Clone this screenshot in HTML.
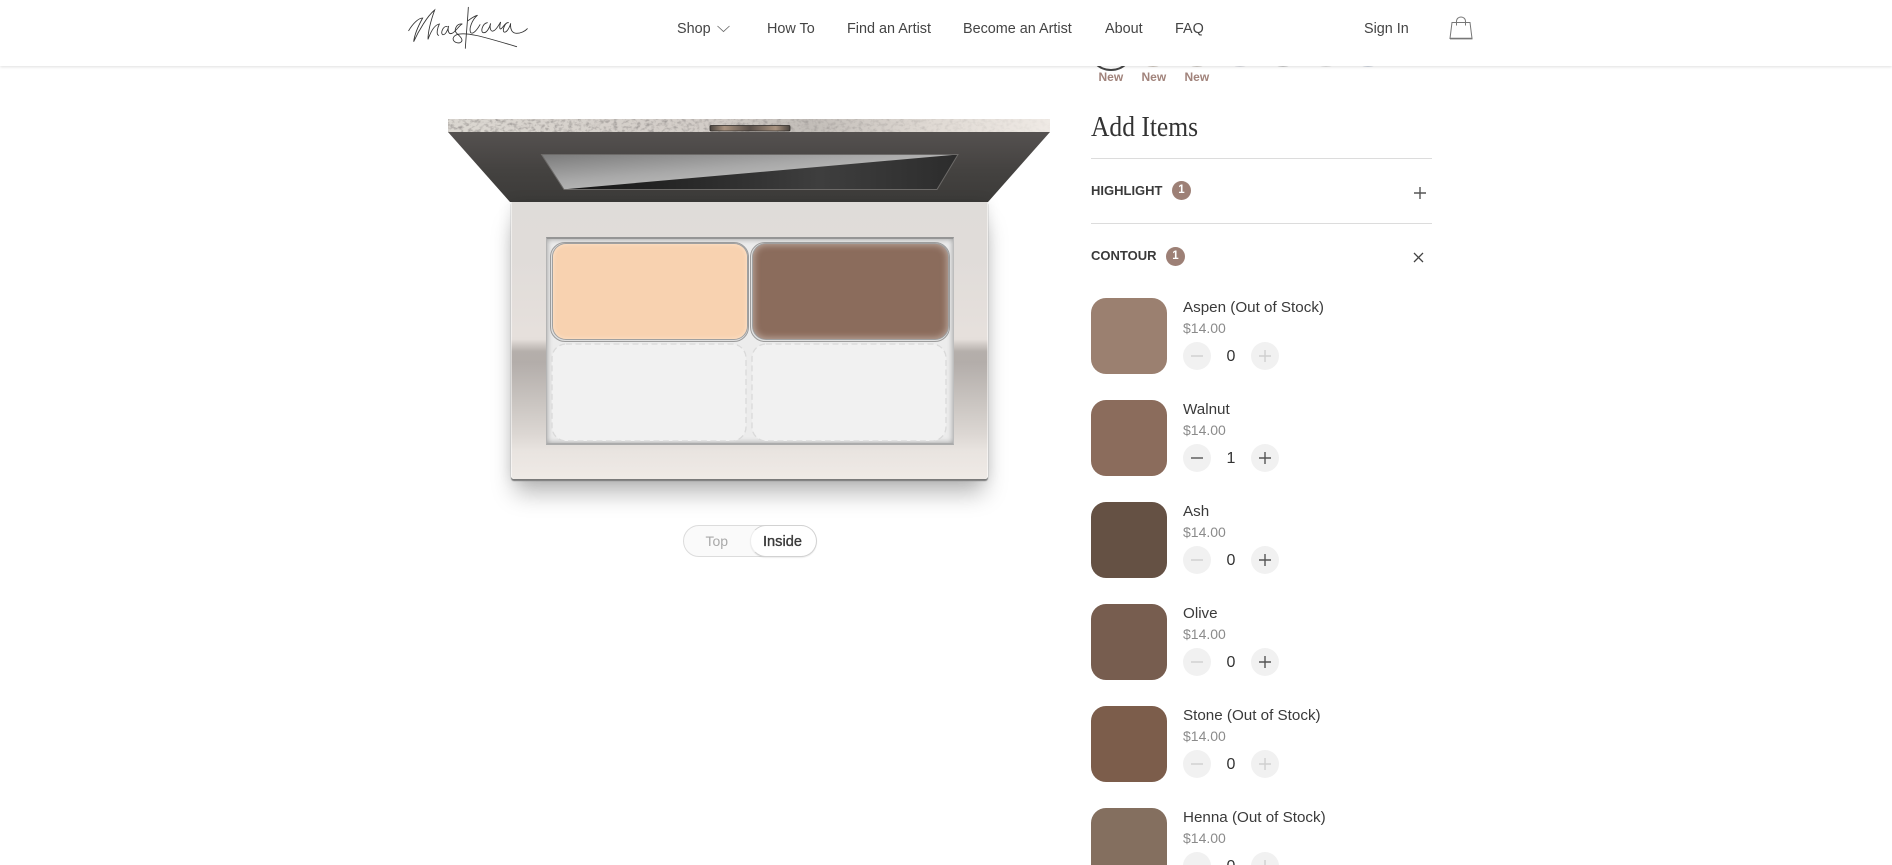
<!DOCTYPE html>
<html lang="en"><head><meta charset="utf-8"><title>Maskcara</title>
<style>
html,body{margin:0;padding:0;background:#fff;width:1892px;height:865px;overflow:hidden}
#w{position:relative;width:1892px;height:865px;overflow:hidden;font-family:"Liberation Sans",Arial,sans-serif;color:#3a3a3a}
.a{position:absolute;white-space:nowrap}
header{position:absolute;left:0;top:0;width:1892px;height:66px;background:#fff;box-shadow:0 1px 3px rgba(0,0,0,.13);z-index:5}
.nav{font-size:14.4px;line-height:20px;color:#444;top:19px}
.new{font-size:12px;font-weight:bold;color:#a1837b;top:70px;line-height:15px}
.arc{position:absolute;border-radius:50%;width:36px;height:36px;top:31px}
.rule{position:absolute;left:1091px;width:341px;height:1px;background:#dcdcdc}
.sec{font-size:13px;font-weight:bold;color:#3a3a3a;left:1091px;line-height:20px}
.bdg{position:absolute;width:19px;height:19px;border-radius:50%;background:#9d8076;color:#fff;font-size:11.5px;font-weight:bold;line-height:19px;text-align:center}
.sw{position:absolute;left:1091px;width:76px;height:76px;border-radius:15px}
.nm{left:1183px;font-size:15.2px;line-height:20px;color:#3a3a3a}
.pr{left:1183px;font-size:14px;line-height:20px;color:#8b8b8b}
.qt{left:1216px;width:30px;text-align:center;font-size:16px;line-height:20px;color:#333}
.b{position:absolute;width:28px;height:28px;border-radius:50%;background:#f1f1f1}
.b svg{display:block}
.b path{fill:none;stroke-width:1.4;stroke:#555}
.b.d path{stroke:#cfcfcf}
.body{position:absolute;left:511px;top:202px;width:477px;height:277px;border-radius:0 0 3px 3px;
background:linear-gradient(180deg,#dfdcd9 0,#e0dcd9 20%,#e6e0dc 48%,#e5dfdb 49.5%,#b5afab 54%,#b3adaa 58%,#c9c4c0 72%,#dcd7d3 84%,#e9e4e0 90%,#efeae6 100%);
box-shadow:inset 1px 0 0 rgba(255,255,255,.5),inset -1px 0 0 rgba(255,255,255,.5),0 2px 1px #7a7a7a,0 18px 22px -4px rgba(0,0,0,.28),0 0 14px rgba(0,0,0,.1)}
.well{position:absolute;left:546px;top:237px;width:408px;height:208px;background:#ececec;box-sizing:border-box;border-top:2px solid #959595;border-bottom:2px solid #ababab;border-left:1px solid #b5b5b5;border-right:1px solid #bdbdbd;box-shadow:inset 0 0 6px rgba(0,0,0,.35)}
.pan{position:absolute;box-sizing:border-box;border-radius:15px;border:1.5px solid #9c9c9c;padding:1.5px;background:#e0e0e0}
.pan i{display:block;width:100%;height:100%;border-radius:13px}
.tg{position:absolute;left:683px;top:525px;width:133px;height:32px;box-sizing:border-box;border:1px solid #dcdcdc;border-radius:16px;background:#fafafa}
.tg b{position:absolute;left:66px;top:-1px;width:67px;height:32px;box-sizing:border-box;border-radius:16px;background:#fff;border:1px solid #d2d2d2;border-left-color:#eee;box-shadow:0 1px 1px rgba(0,0,0,.08)}
</style></head><body><div id="w">

<!-- swatch row, mostly hidden beneath header -->
<div class="a" style="left:1088px;top:25px;width:42px;height:42px;border:2px solid #444;border-radius:50%"></div>
<div class="arc" style="left:1135px;background:#cfc8bf"></div>
<div class="arc" style="left:1179px;background:#d2cdc8"></div>
<div class="arc" style="left:1222px;background:#dcdde3"></div>
<div class="arc" style="left:1265px;background:#c9c9c9"></div>
<div class="arc" style="left:1308px;background:#e2e2e2"></div>
<div class="arc" style="left:1350px;background:#d0d6e0"></div>
<div class="a new" style="left:1098.5px">New</div>
<div class="a new" style="left:1141.5px">New</div>
<div class="a new" style="left:1184.5px">New</div>

<header>
<svg class="a" style="left:400px;top:0" width="140" height="60" viewBox="0 0 420 180" fill="none" stroke="#333" stroke-width="2.6" stroke-linecap="round" role="img" aria-label="Maskcara">
<path d="M26 92C38 72 55 54 68 54C58 72 44 100 41 125C56 92 82 48 104 30C94 58 84 92 84 118C92 96 104 74 118 72C112 84 108 104 116 106"/>
<path d="M142 80C130 76 120 100 128 104C136 106 144 90 146 78C142 92 146 104 156 100C166 96 176 78 186 72"/>
<path d="M186 72C170 70 160 90 170 100C184 112 192 122 180 128C166 132 150 118 166 106C190 92 250 110 350 140"/>
<path d="M205 22C203 60 198 110 196 145"/>
<path d="M204 62C215 54 224 48 232 46M232 46C216 60 206 86 212 98C220 104 232 88 240 74"/>
<path d="M262 68C248 70 240 96 250 98C262 100 270 78 272 70C268 84 272 98 282 92C290 88 298 72 302 66C298 80 298 90 304 86C310 80 318 66 326 68C316 66 306 90 312 96C320 100 330 80 332 70C330 88 336 100 350 100C362 100 375 94 382 86"/>
</svg>
<div class="a nav" style="left:677px">Shop</div>
<svg class="a" style="left:717px;top:25px" width="13" height="8" fill="none" stroke="#666" stroke-width=".8"><path d="M.5 1l6 5.6 6-5.6"/></svg>
<div class="a nav" style="left:767px">How To</div>
<div class="a nav" style="left:847px">Find an Artist</div>
<div class="a nav" style="left:963px">Become an Artist</div>
<div class="a nav" style="left:1105px">About</div>
<div class="a nav" style="left:1175px">FAQ</div>
<div class="a nav" style="left:1364px">Sign In</div>
<svg class="a" style="left:1449px;top:15px" width="25" height="25" fill="none" stroke="#777" stroke-width="1"><path d="M3 7.5h18l2 16H1z"/><path d="M1 23.6h22.500" stroke-width="1.6"/><path d="M7.500 10.500V6.500c0-6 9-6 9 0V10.500"/></svg>
</header>

<!-- compact lid -->
<svg class="a" style="left:440px;top:110px" width="620" height="100" viewBox="440 110 620 100">
<defs>
<linearGradient id="lid" x1="0" y1="0" x2="0" y2="1"><stop offset="0" stop-color="#555150"/><stop offset=".55" stop-color="#444240"/><stop offset="1" stop-color="#3c3b39"/></linearGradient>
<linearGradient id="st" x1="0" y1="0" x2="1" y2="0"><stop offset="0" stop-color="#dbd7d1"/><stop offset=".45" stop-color="#d2ccc7"/><stop offset=".6" stop-color="#c2bdb8"/><stop offset=".8" stop-color="#dfd9d3"/><stop offset="1" stop-color="#efeae5"/></linearGradient>
<linearGradient id="fade" x1="0" y1="0" x2="1" y2="0"><stop offset="0" stop-color="#fff"/><stop offset=".55" stop-color="#ccc"/><stop offset=".82" stop-color="#444"/><stop offset="1" stop-color="#111"/></linearGradient>
<mask id="m"><rect x="448" y="119" width="602" height="13" fill="url(#fade)"/></mask>
<filter id="n" x="0" y="0" width="100%" height="100%"><feTurbulence type="fractalNoise" baseFrequency=".22 .3" numOctaves="3" seed="4"/><feColorMatrix values="0 0 0 0 .3  0 0 0 0 .28  0 0 0 0 .27  2.2 0 0 0 -1"/></filter>
<linearGradient id="lt" x1="0" y1="0" x2="1" y2="1"><stop offset="0" stop-color="#7b7b7b"/><stop offset=".4" stop-color="#a8a8a8"/><stop offset="1" stop-color="#d8d8d6"/></linearGradient>
<linearGradient id="dk" x1="0" y1="0" x2="1" y2="0"><stop offset="0" stop-color="#141414"/><stop offset=".65" stop-color="#3e3e3e"/><stop offset="1" stop-color="#2c2c2c"/></linearGradient>
<linearGradient id="cl" x1="0" y1="0" x2="1" y2="0"><stop offset="0" stop-color="#4b4540"/><stop offset=".18" stop-color="#a8927f"/><stop offset=".5" stop-color="#5a504a"/><stop offset=".82" stop-color="#a8927f"/><stop offset="1" stop-color="#4b4540"/></linearGradient>
</defs>
<path d="M448 132H1050L988 202H510Z" fill="url(#lid)"/>
<rect x="448" y="119" width="602" height="13" fill="url(#st)"/>
<g mask="url(#m)"><rect x="448" y="119" width="602" height="13" filter="url(#n)"/></g>
<rect x="710" y="125.500" width="80" height="5.500" rx="1" fill="url(#cl)" stroke="#2f2b28" stroke-width=".8"/>
<path d="M541.500 154.500H958L937 189.500H564Z" fill="url(#lt)"/>
<path d="M958 154.500L937 189.500H562Z" fill="url(#dk)"/>
<path d="M541.500 154.500H958L937 189.500H564Z" fill="none" stroke="#6c6a68" stroke-width="1"/>
</svg>

<div class="body"></div>
<div class="well"></div>
<div class="pan" style="left:550px;top:241.500px;width:199px;height:100px"><i style="background:#f8d2b0;box-shadow:0 0 0 1px #a0a0a0,inset 0 0 5px rgba(255,232,210,.9)"></i></div>
<div class="pan" style="left:750px;top:241.500px;width:200px;height:100px"><i style="background:#8b6c5c;box-shadow:0 0 0 1px #a0a0a0,inset 0 0 7px 1px rgba(205,190,182,.75)"></i></div>
<svg class="a" style="left:546px;top:340px" width="406" height="104" fill="#f1f1f1" stroke="#dadada" stroke-width="1.300" stroke-dasharray="6 3.500">
<rect x="6" y="4" width="194" height="97" rx="14"/>
<rect x="206" y="4" width="194" height="97" rx="14"/>
</svg>

<div class="tg"><b></b></div>
<div class="a" style="left:705.500px;top:531px;font-size:14px;line-height:20px;color:#a9a9a9">Top</div>
<div class="a" style="left:763px;top:531.500px;font-size:14.600px;line-height:20px;color:#3a3a3a;-webkit-text-stroke:.35px #3a3a3a">Inside</div>

<!-- right column -->
<div class="a" style="left:1091px;top:110px;font-family:'Liberation Serif',serif;font-size:29px;line-height:34px;color:#333;transform:scaleX(.88);transform-origin:0 0">Add Items</div>
<div class="rule" style="top:158px"></div>
<div class="a sec" style="top:181px">HIGHLIGHT</div>
<div class="bdg" style="left:1172px;top:181px">1</div>
<svg class="a" style="left:1413px;top:186px" width="14" height="14" fill="none" stroke="#555" stroke-width="1.400"><path d="M1 7h12M7 1v12"/></svg>
<div class="rule" style="top:223px"></div>
<div class="a sec" style="top:246px">CONTOUR</div>
<div class="bdg" style="left:1166px;top:247px">1</div>
<svg class="a" style="left:1413px;top:252px" width="11" height="11" fill="none" stroke="#444" stroke-width="1.300"><path d="M1 1l9 9M10 1l-9 9"/></svg>

<!-- Aspen -->
<div class="sw" style="top:298px;background:#9b8070"></div>
<div class="a nm" style="top:298px">Aspen (Out of Stock)</div>
<div class="a pr" style="top:318px">$14.00</div>
<div class="b d" style="left:1183px;top:342px"><svg width="28" height="28"><path d="M8 14h12"/></svg></div>
<div class="a qt" style="top:347px">0</div>
<div class="b d" style="left:1251px;top:342px"><svg width="28" height="28"><path d="M8 14h12M14 8v12"/></svg></div>
<!-- Walnut -->
<div class="sw" style="top:400px;background:#8b6c5c"></div>
<div class="a nm" style="top:400px">Walnut</div>
<div class="a pr" style="top:420px">$14.00</div>
<div class="b" style="left:1183px;top:444px"><svg width="28" height="28"><path d="M8 14h12"/></svg></div>
<div class="a qt" style="top:449px">1</div>
<div class="b" style="left:1251px;top:444px"><svg width="28" height="28"><path d="M8 14h12M14 8v12"/></svg></div>
<!-- Ash -->
<div class="sw" style="top:502px;background:#655144"></div>
<div class="a nm" style="top:502px">Ash</div>
<div class="a pr" style="top:522px">$14.00</div>
<div class="b d" style="left:1183px;top:546px"><svg width="28" height="28"><path d="M8 14h12"/></svg></div>
<div class="a qt" style="top:551px">0</div>
<div class="b" style="left:1251px;top:546px"><svg width="28" height="28"><path d="M8 14h12M14 8v12"/></svg></div>
<!-- Olive -->
<div class="sw" style="top:604px;background:#775d4f"></div>
<div class="a nm" style="top:604px">Olive</div>
<div class="a pr" style="top:624px">$14.00</div>
<div class="b d" style="left:1183px;top:648px"><svg width="28" height="28"><path d="M8 14h12"/></svg></div>
<div class="a qt" style="top:653px">0</div>
<div class="b" style="left:1251px;top:648px"><svg width="28" height="28"><path d="M8 14h12M14 8v12"/></svg></div>
<!-- Stone -->
<div class="sw" style="top:706px;background:#7c5d4b"></div>
<div class="a nm" style="top:706px">Stone (Out of Stock)</div>
<div class="a pr" style="top:726px">$14.00</div>
<div class="b d" style="left:1183px;top:750px"><svg width="28" height="28"><path d="M8 14h12"/></svg></div>
<div class="a qt" style="top:755px">0</div>
<div class="b d" style="left:1251px;top:750px"><svg width="28" height="28"><path d="M8 14h12M14 8v12"/></svg></div>
<!-- Henna -->
<div class="sw" style="top:808px;background:#846f5f"></div>
<div class="a nm" style="top:808px">Henna (Out of Stock)</div>
<div class="a pr" style="top:828px">$14.00</div>
<div class="b d" style="left:1183px;top:852px"><svg width="28" height="28"><path d="M8 14h12"/></svg></div>
<div class="a qt" style="top:857px">0</div>
<div class="b d" style="left:1251px;top:852px"><svg width="28" height="28"><path d="M8 14h12M14 8v12"/></svg></div>
</div></body></html>
